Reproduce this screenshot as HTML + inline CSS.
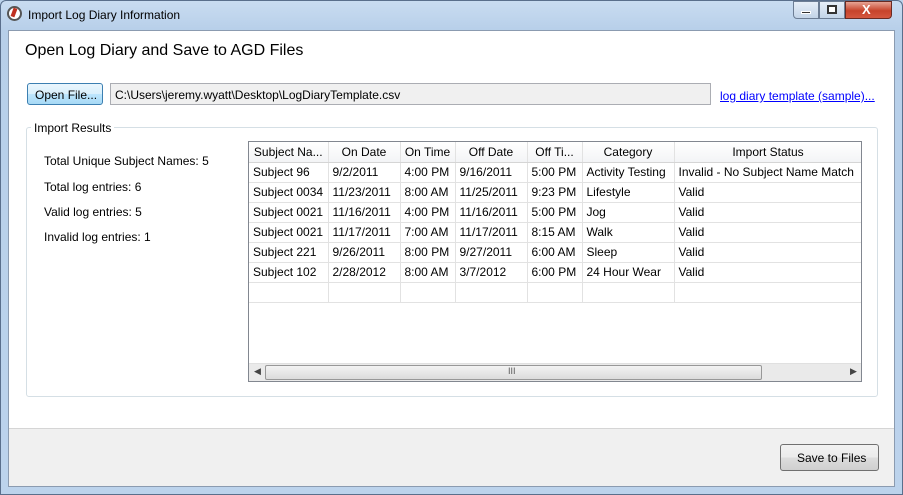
<html><head><style>
*{margin:0;padding:0;box-sizing:border-box}
body{width:903px;height:495px;position:relative;overflow:hidden;background:#bcd3ec;font-family:"Liberation Sans",sans-serif;font-size:12px;color:#000}
.a{position:absolute}
.t{position:absolute;white-space:nowrap}
table{border-collapse:collapse;table-layout:fixed;font-size:12px}
td{height:20px;border-right:1px solid #e2e2e2;border-bottom:1px solid #e2e2e2;padding:0 4px;white-space:nowrap;overflow:hidden}
th{height:20px;font-weight:normal;border-right:1px solid #e2e2e2;border-bottom:1px solid #d5d5d5;background:linear-gradient(#fff,#f3f4f6);white-space:nowrap;overflow:hidden}
</style></head><body>
<div class="a" style="left:0;top:0;width:903px;height:495px;background:linear-gradient(#c9dcf1,#b7cfe9 30px,#bcd3ec);border:1px solid #5a6f8c;border-radius:6px 6px 0 0"></div>
<div class="a" style="left:7px;top:6px;width:15px;height:15px;border-radius:50%;background:#fff;border:2px solid #555"></div>
<div class="a" style="left:12px;top:8px;width:4px;height:9px;background:#c03020;transform:rotate(20deg)"></div>
<div class="t" style="left:28px;top:8px;font-size:12px">Import Log Diary Information</div>
<div class="a" style="left:793px;top:1px;width:26px;height:18px;border:1px solid #6c7d94;border-radius:0 0 0 4px;background:linear-gradient(#e6eef8,#c3d4e8)"></div>
<div class="a" style="left:801px;top:11px;width:10px;height:3px;background:#333;border:1px solid #fff"></div>
<div class="a" style="left:819px;top:1px;width:26px;height:18px;border:1px solid #6c7d94;background:linear-gradient(#e6eef8,#c3d4e8)"></div>
<div class="a" style="left:827px;top:5px;width:10px;height:9px;border:2px solid #333;background:#fff"></div>
<div class="a" style="left:845px;top:1px;width:47px;height:18px;border:1px solid #6a2a22;border-radius:0 0 4px 0;background:linear-gradient(#e8a595,#c7432b 55%,#d4573f)"></div>
<div class="t" style="left:862px;top:2px;color:#fff;font-weight:bold;font-size:13px">X</div>
<div class="a" style="left:8px;top:30px;width:887px;height:457px;background:#fff;border:1px solid #8b9bb0"></div>
<div class="t" style="left:25px;top:42px;font-size:16px">Open Log Diary and Save to AGD Files</div>
<div class="a" style="left:27px;top:83px;width:76px;height:22px;border:1px solid #3c7fb1;border-radius:3px;background:linear-gradient(#eaf6fd,#d9f0fc 50%,#bee6fd 51%,#a7d9f5)"></div>
<div class="t" style="left:35px;top:88px">Open File...</div>
<div class="a" style="left:110px;top:83px;width:601px;height:22px;border:1px solid #abadb3;background:#f0f0f0"></div>
<div class="t" style="left:115px;top:88px">C:\Users\jeremy.wyatt\Desktop\LogDiaryTemplate.csv</div>
<div class="t" style="left:720px;top:89px;color:#0000ff;text-decoration:underline">log diary template (sample)...</div>
<div class="a" style="left:26px;top:127px;width:852px;height:270px;border:1px solid #d5dfe5;border-radius:3px"></div>
<div class="t" style="left:31px;top:121px;background:#fff;padding:0 3px">Import Results</div>
<div class="t" style="left:44px;top:154px">Total Unique Subject Names: 5</div>
<div class="t" style="left:44px;top:180px">Total log entries: 6</div>
<div class="t" style="left:44px;top:205px">Valid log entries: 5</div>
<div class="t" style="left:44px;top:230px">Invalid log entries: 1</div>
<div class="a" style="left:248px;top:141px;width:614px;height:241px;border:1px solid #828790;background:#fff;overflow:hidden">
<table style="width:613px">
<colgroup><col style="width:79px"><col style="width:72px"><col style="width:55px"><col style="width:72px"><col style="width:55px"><col style="width:92px"><col style="width:188px"></colgroup>
<tr><th>Subject Na...</th><th>On Date</th><th>On Time</th><th>Off Date</th><th>Off Ti...</th><th>Category</th><th>Import Status</th></tr>
<tr><td>Subject 96</td><td>9/2/2011</td><td>4:00 PM</td><td>9/16/2011</td><td>5:00 PM</td><td>Activity Testing</td><td>Invalid - No Subject Name Match</td></tr>
<tr><td>Subject 0034</td><td>11/23/2011</td><td>8:00 AM</td><td>11/25/2011</td><td>9:23 PM</td><td>Lifestyle</td><td>Valid</td></tr>
<tr><td>Subject 0021</td><td>11/16/2011</td><td>4:00 PM</td><td>11/16/2011</td><td>5:00 PM</td><td>Jog</td><td>Valid</td></tr>
<tr><td>Subject 0021</td><td>11/17/2011</td><td>7:00 AM</td><td>11/17/2011</td><td>8:15 AM</td><td>Walk</td><td>Valid</td></tr>
<tr><td>Subject 221</td><td>9/26/2011</td><td>8:00 PM</td><td>9/27/2011</td><td>6:00 AM</td><td>Sleep</td><td>Valid</td></tr>
<tr><td>Subject 102</td><td>2/28/2012</td><td>8:00 AM</td><td>3/7/2012</td><td>6:00 PM</td><td>24 Hour Wear</td><td>Valid</td></tr>
<tr><td></td><td></td><td></td><td></td><td></td><td></td><td></td></tr>
</table>
<div class="a" style="left:0;top:221px;width:612px;height:18px;background:#eaeaea;border-top:1px solid #e0e0e0"></div>
<div class="t" style="left:5px;top:224px;font-size:9px;color:#444">◀</div>
<div class="a" style="left:16px;top:223px;width:497px;height:15px;border:1px solid #989898;border-radius:2px;background:linear-gradient(#f3f3f3,#dcdcdc)"></div>
<div class="t" style="left:259px;top:224px;font-size:9px;color:#555">III</div>
<div class="t" style="left:601px;top:224px;font-size:9px;color:#444">▶</div>
</div>
<div class="a" style="left:9px;top:428px;width:885px;height:58px;background:#f0f0f0;border-top:1px solid #d5d5d5"></div>
<div class="a" style="left:780px;top:444px;width:99px;height:27px;border:1px solid #707070;border-radius:3px;background:linear-gradient(#f2f2f2,#ebebeb 50%,#dddddd 51%,#cfcfcf)"></div>
<div class="t" style="left:797px;top:451px">Save to Files</div>
</body></html>
